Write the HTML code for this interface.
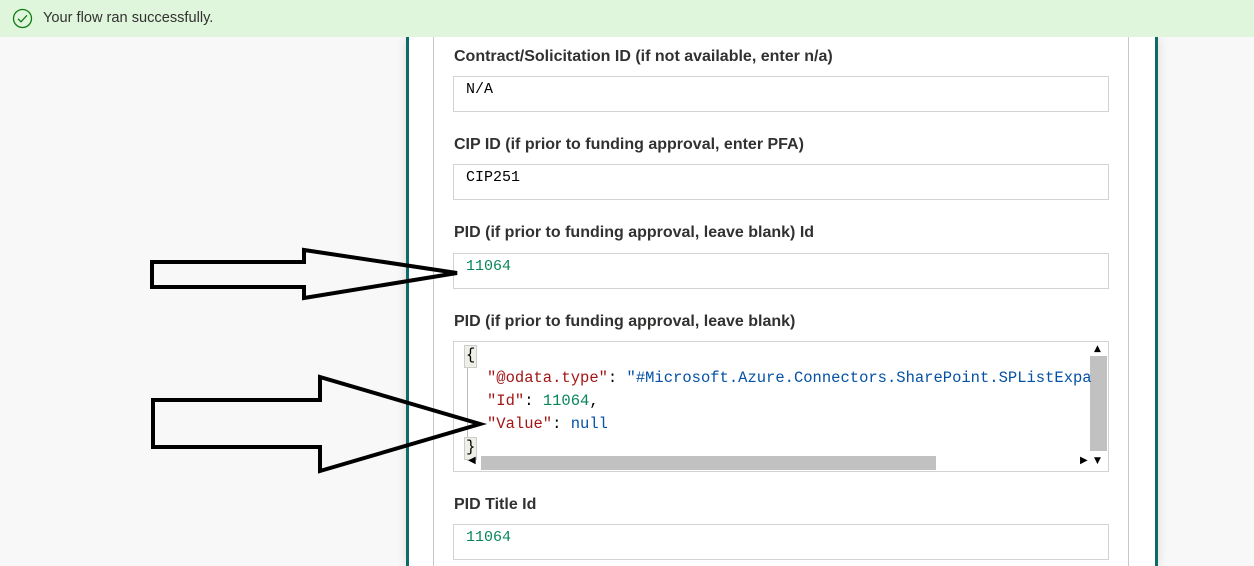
<!DOCTYPE html>
<html><head><style>
body{margin:0;width:1254px;height:566px;overflow:hidden;background:#f8f8f8;font-family:"Liberation Sans",sans-serif;position:relative}
.ban{position:absolute;left:0;top:0;width:1254px;height:37px;background:#dff6dd;z-index:3}
.ban span{position:absolute;left:43px;top:10px;font-size:14.6px;color:#323130}
.panel{position:absolute;left:406px;top:37px;width:746px;height:529px;background:#fff;border-left:3px solid #0b6a6a;border-right:3px solid #0b6a6a;box-shadow:0 0 10px rgba(0,0,0,.12)}
.inner{position:absolute;left:433px;top:37px;width:694px;height:529px;border-left:1px solid #c8c8c8;border-right:1px solid #c8c8c8}
.lbl{position:absolute;left:454px;font-size:16px;font-weight:bold;color:#323130;letter-spacing:0}
.box{position:absolute;left:453px;width:654px;border:1px solid #d2d2d2;background:#fff;font-family:"Liberation Mono",monospace;font-size:15px}
.box span{position:absolute;left:12px;top:4px}
.code{position:absolute;font-family:"Liberation Mono",monospace;font-size:15.5px;white-space:pre;left:487px}
.k{color:#a31515}.s{color:#0451a5}.n{color:#098658}
</style></head><body>
<div class="ban"><svg style="position:absolute;left:12px;top:8px" width="21" height="21" viewBox="0 0 21 21"><circle cx="10.5" cy="10.5" r="9" fill="none" stroke="#107c10" stroke-width="1.3"/><path d="M6 10.8l3 3 6-6.5" fill="none" stroke="#107c10" stroke-width="1.3"/></svg><span>Your flow ran successfully.</span></div>
<div class="panel"></div><div class="inner"></div>
<div class="lbl" style="top:48px">Contract/Solicitation ID (if not available, enter n/a)</div>
<div class="box" style="top:76px;height:34px"><span>N/A</span></div>
<div class="lbl" style="top:136px">CIP ID (if prior to funding approval, enter PFA)</div>
<div class="box" style="top:164px;height:34px"><span>CIP251</span></div>
<div class="lbl" style="top:224px">PID (if prior to funding approval, leave blank) Id</div>
<div class="box" style="top:253px;height:34px"><span style="color:#098658">11064</span></div>
<div class="lbl" style="top:313px">PID (if prior to funding approval, leave blank)</div>
<div class="box" style="top:341px;height:129px;overflow:hidden">
<div style="position:absolute;left:13px;top:4px;width:1px;height:115px;background:#bbb"></div>
<div style="position:absolute;left:10px;top:3px;width:11px;height:21px;background:#eef0e8;border:1px solid #ccc"></div>
<div style="position:absolute;left:10px;top:95px;width:11px;height:21px;background:#eef0e8;border:1px solid #ccc"></div>
<div style="position:absolute;left:636px;top:14px;width:17px;height:95px;background:#c1c1c1"></div>
<div style="position:absolute;left:27px;top:114px;width:455px;height:14px;background:#c1c1c1"></div>
<div style="position:absolute;left:640px;top:2px;font-size:9px;font-family:'DejaVu Sans'">▲</div>
<div style="position:absolute;left:640px;top:114px;font-size:9px;font-family:'DejaVu Sans'">▼</div>
<div style="position:absolute;left:626px;top:113px;font-size:10px;font-family:'DejaVu Sans'">▶</div>
<div style="position:absolute;left:14px;top:113px;font-size:10px;font-family:'DejaVu Sans'">◀</div>
</div>
<div class="code" style="left:466px;top:346px">{</div>
<div class="code" style="top:369px"><span class="k">"@odata.type"</span>: <span class="s">"#Microsoft.Azure.Connectors.SharePoint.SPListExpa</span></div>
<div class="code" style="top:392px"><span class="k">"Id"</span>: <span class="n">11064</span>,</div>
<div class="code" style="top:415px"><span class="k">"Value"</span>: <span class="s">null</span></div>
<div class="code" style="left:466px;top:438px">}</div>
<div class="lbl" style="top:496px">PID Title Id</div>
<div class="box" style="top:524px;height:34px"><span style="color:#098658">11064</span></div>
<svg style="position:absolute;left:0;top:0;z-index:2" width="1254" height="566"><path d="M152 262H304V250L457 273L304 298V287H152Z" fill="none" stroke="#000" stroke-width="4" stroke-linejoin="miter"/><path d="M153 400H320V377L480 424L320 471V447H153Z" fill="none" stroke="#000" stroke-width="4"/></svg>
</body></html>
